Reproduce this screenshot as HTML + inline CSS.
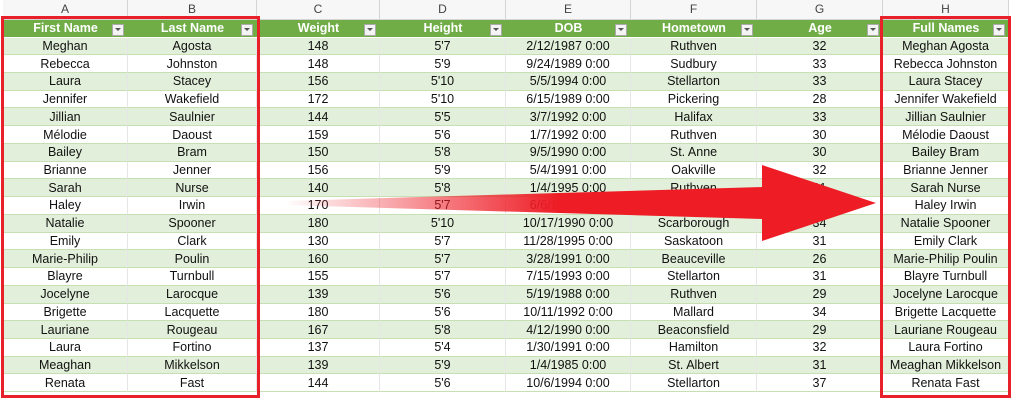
<!DOCTYPE html>
<html><head><meta charset="utf-8"><style>
*{margin:0;padding:0;box-sizing:border-box}
body{width:1024px;height:400px;overflow:hidden;background:#fff;font-family:"Liberation Sans",sans-serif;position:relative}
.g{position:absolute;left:3px;top:0;display:grid;grid-template-columns:125px 129px 123px 126px 125px 126px 126px 126px;grid-template-rows:19.5px 18px;grid-auto-rows:17.74px}
.g div{font-size:12.5px;display:flex;align-items:center;justify-content:center;white-space:nowrap;border-right:1px solid #e6e6e6;border-bottom:1px solid #c6e0b4;color:#111}
.g .L{background:#f7f7f7;color:#444;font-size:12px;border-bottom:1px solid #d4d4d4;border-right:1px solid #d4d4d4}
.g .H{background:#70ad47;color:#fff;font-weight:bold;position:relative;border-right:none;border-bottom:1px solid #fff}
.g .H::after{content:"";position:absolute;right:4px;top:4px;width:10px;height:10px;background:#f4f4f4;border:1px solid #aaa}
.g .H::before{content:"";position:absolute;right:7px;top:8px;border-left:3px solid transparent;border-right:3px solid transparent;border-top:3px solid #555;z-index:2}
.g .b{background:#e2efda}
.box{position:absolute;border:3px solid #e8202a}
</style></head><body>
<div class="g">
<div class="L">A</div><div class="L">B</div><div class="L">C</div><div class="L">D</div><div class="L">E</div><div class="L">F</div><div class="L">G</div><div class="L">H</div>
<div class="H">First Name</div><div class="H">Last Name</div><div class="H">Weight</div><div class="H">Height</div><div class="H">DOB</div><div class="H">Hometown</div><div class="H">Age</div><div class="H">Full Names</div>
<div class="b">Meghan</div><div class="b">Agosta</div><div class="b">148</div><div class="b">5'7</div><div class="b">2/12/1987 0:00</div><div class="b">Ruthven</div><div class="b">32</div><div class="b">Meghan Agosta</div>
<div>Rebecca</div><div>Johnston</div><div>148</div><div>5'9</div><div>9/24/1989 0:00</div><div>Sudbury</div><div>33</div><div>Rebecca Johnston</div>
<div class="b">Laura</div><div class="b">Stacey</div><div class="b">156</div><div class="b">5'10</div><div class="b">5/5/1994 0:00</div><div class="b">Stellarton</div><div class="b">33</div><div class="b">Laura Stacey</div>
<div>Jennifer</div><div>Wakefield</div><div>172</div><div>5'10</div><div>6/15/1989 0:00</div><div>Pickering</div><div>28</div><div>Jennifer Wakefield</div>
<div class="b">Jillian</div><div class="b">Saulnier</div><div class="b">144</div><div class="b">5'5</div><div class="b">3/7/1992 0:00</div><div class="b">Halifax</div><div class="b">33</div><div class="b">Jillian Saulnier</div>
<div>Mélodie</div><div>Daoust</div><div>159</div><div>5'6</div><div>1/7/1992 0:00</div><div>Ruthven</div><div>30</div><div>Mélodie Daoust</div>
<div class="b">Bailey</div><div class="b">Bram</div><div class="b">150</div><div class="b">5'8</div><div class="b">9/5/1990 0:00</div><div class="b">St. Anne</div><div class="b">30</div><div class="b">Bailey Bram</div>
<div>Brianne</div><div>Jenner</div><div>156</div><div>5'9</div><div>5/4/1991 0:00</div><div>Oakville</div><div>32</div><div>Brianne Jenner</div>
<div class="b">Sarah</div><div class="b">Nurse</div><div class="b">140</div><div class="b">5'8</div><div class="b">1/4/1995 0:00</div><div class="b">Ruthven</div><div class="b">31</div><div class="b">Sarah Nurse</div>
<div>Haley</div><div>Irwin</div><div>170</div><div>5'7</div><div>6/6/1988 0:00</div><div>Ottawa</div><div>32</div><div>Haley Irwin</div>
<div class="b">Natalie</div><div class="b">Spooner</div><div class="b">180</div><div class="b">5'10</div><div class="b">10/17/1990 0:00</div><div class="b">Scarborough</div><div class="b">34</div><div class="b">Natalie Spooner</div>
<div>Emily</div><div>Clark</div><div>130</div><div>5'7</div><div>11/28/1995 0:00</div><div>Saskatoon</div><div>31</div><div>Emily Clark</div>
<div class="b">Marie-Philip</div><div class="b">Poulin</div><div class="b">160</div><div class="b">5'7</div><div class="b">3/28/1991 0:00</div><div class="b">Beauceville</div><div class="b">26</div><div class="b">Marie-Philip Poulin</div>
<div>Blayre</div><div>Turnbull</div><div>155</div><div>5'7</div><div>7/15/1993 0:00</div><div>Stellarton</div><div>31</div><div>Blayre Turnbull</div>
<div class="b">Jocelyne</div><div class="b">Larocque</div><div class="b">139</div><div class="b">5'6</div><div class="b">5/19/1988 0:00</div><div class="b">Ruthven</div><div class="b">29</div><div class="b">Jocelyne Larocque</div>
<div>Brigette</div><div>Lacquette</div><div>180</div><div>5'6</div><div>10/11/1992 0:00</div><div>Mallard</div><div>34</div><div>Brigette Lacquette</div>
<div class="b">Lauriane</div><div class="b">Rougeau</div><div class="b">167</div><div class="b">5'8</div><div class="b">4/12/1990 0:00</div><div class="b">Beaconsfield</div><div class="b">29</div><div class="b">Lauriane Rougeau</div>
<div>Laura</div><div>Fortino</div><div>137</div><div>5'4</div><div>1/30/1991 0:00</div><div>Hamilton</div><div>32</div><div>Laura Fortino</div>
<div class="b">Meaghan</div><div class="b">Mikkelson</div><div class="b">139</div><div class="b">5'9</div><div class="b">1/4/1985 0:00</div><div class="b">St. Albert</div><div class="b">31</div><div class="b">Meaghan Mikkelson</div>
<div>Renata</div><div>Fast</div><div>144</div><div>5'6</div><div>10/6/1994 0:00</div><div>Stellarton</div><div>37</div><div>Renata Fast</div>
</div>
<div class="box" style="left:1px;top:16px;width:259px;height:382px"></div>
<div class="box" style="left:880px;top:16px;width:131px;height:382px"></div>
<svg style="position:absolute;left:0;top:0" width="1024" height="400">
<defs><linearGradient id="a" x1="285" y1="0" x2="560" y2="0" gradientUnits="userSpaceOnUse"><stop offset="0" stop-color="#ee1c25" stop-opacity="0"/><stop offset="1" stop-color="#ee1c25"/></linearGradient></defs>
<polygon points="285,201 762,187 762,165 876,203 762,241 762,219 285,205" fill="url(#a)"/>
</svg>
</body></html>
